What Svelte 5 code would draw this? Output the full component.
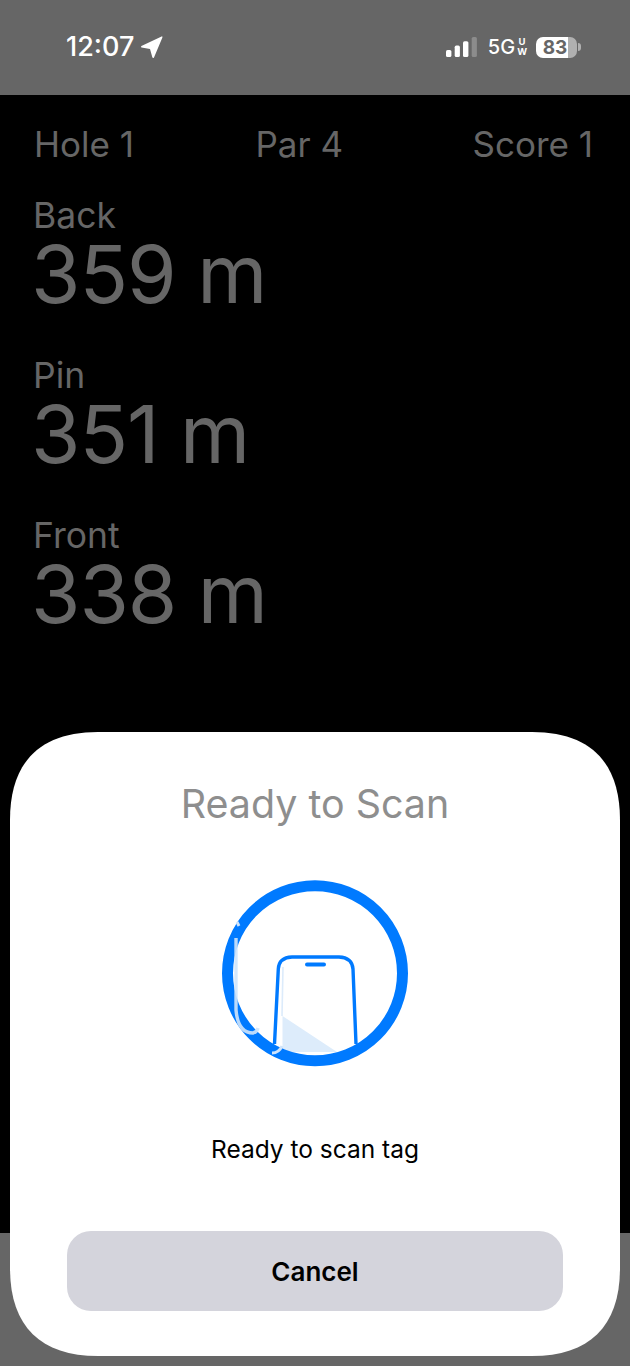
<script lang="ts">
  const distances = [
    { label: "Back", value: "359 m" },
    { label: "Pin", value: "351 m" },
    { label: "Front", value: "338 m" },
  ];
</script>

<div class="screen">
  <header class="status">
    <div class="time">
      <span>12:07</span>
      <svg class="arrow" width="24" height="24" viewBox="0 0 24 24">
        <path d="M22.6 1.4 L2.4 11 Q1.4 12 2.6 12.6 L11 14 L13.4 22.6 Q14.2 23.6 15 22.4 L23.4 2.4 Q23.6 1 22.6 1.4 Z" fill="#fff" />
      </svg>
    </div>
    <div class="indicators">
      <svg class="signal" width="33" height="21" viewBox="0 0 33 21">
        <rect x="0" y="13" width="5.4" height="7" rx="1.6" fill="#fff" />
        <rect x="8.7" y="8.6" width="5.2" height="11.4" rx="1.6" fill="#fff" />
        <rect x="17" y="4.2" width="5.4" height="15.8" rx="1.6" fill="#fff" />
        <rect x="25.7" y="0" width="5.2" height="20" rx="1.6" fill="#8c8c8c" />
      </svg>
      <div class="net">
        <span class="fiveg">5G</span>
        <span class="uw"><span>U</span><span>W</span></span>
      </div>
      <div class="battery">
        <div class="pill"><span>83</span></div>
        <div class="tip"></div>
      </div>
    </div>
  </header>

  <main class="content">
    <div class="topline">
      <span>Hole 1</span>
      <span class="par">Par 4</span>
      <span>Score 1</span>
    </div>
    {#each distances as d}
      <section class="distance">
        <div class="label">{d.label}</div>
        <div class="value">{d.value}</div>
      </section>
    {/each}
  </main>

  <div class="footer-dim"></div>

  <div class="sheet">
    <h1>Ready to Scan</h1>
    <svg class="scan" width="210" height="210" viewBox="0 0 210 210">
      <defs>
        <clipPath id="inner"><circle cx="105" cy="103.3" r="88" /></clipPath>
      </defs>
      <polygon points="72.5,146 127,182 72.5,182" fill="#ddecfb" clip-path="url(#inner)" />
      <path d="M64.5 174 L68.3 99 Q69 87.5 82 87 L129 87 Q142 87.5 143 99 L146 174" fill="none" stroke="#007aff" stroke-width="3.4" />
      <path d="M72 146 L73 97" fill="none" stroke="#dcebfb" stroke-width="1.6" />
      <rect x="95" y="92.5" width="21" height="4" rx="2" fill="#007aff" />
      <circle cx="105" cy="103.3" r="87.5" fill="none" stroke="#007aff" stroke-width="11" />
      <path d="M26 68 L26 140 Q28 163 43 163 Q47 162 48 158" fill="none" stroke="#cfe4fb" stroke-width="3.4" opacity="0.9" />
      <path d="M62 183 Q69 183 72 176" fill="none" stroke="#cfe4fb" stroke-width="3" />
      <path d="M27 52 L29 56" fill="none" stroke="#cfe4fb" stroke-width="3" />
    </svg>
    <p>Ready to scan tag</p>
    <button class="cancel">Cancel</button>
  </div>
</div>

<style>
  :global(body) {
    margin: 0;
    background: #000;
  }
  .screen {
    position: relative;
    width: 630px;
    height: 1366px;
    display: flex;
    flex-direction: column;
    overflow: hidden;
    font-family: Inter, "Noto Sans", sans-serif;
    background: #000;
  }
  .status {
    height: 95px;
    flex-shrink: 0;
    background: #666;
    color: #fff;
    display: flex;
    align-items: flex-start;
    justify-content: space-between;
    padding: 31px 49px 0 66px;
    box-sizing: border-box;
  }
  .time {
    display: flex;
    align-items: center;
    gap: 5px;
    font-size: 27px;
    font-weight: 500;
    line-height: 32px;
  }
  .arrow {
    margin-top: -1px;
  }
  .indicators {
    display: flex;
    align-items: center;
    height: 32px;
  }
  .signal {
    margin-right: 9px;
  }
  .net {
    display: flex;
    align-items: center;
    gap: 2px;
    margin-right: 9px;
  }
  .fiveg {
    font-size: 20px;
    font-weight: 500;
    line-height: 22px;
  }
  .uw {
    display: flex;
    flex-direction: column;
    align-items: center;
    font-size: 9.5px;
    font-weight: 700;
    line-height: 10px;
  }
  .battery {
    display: flex;
    align-items: center;
    gap: 1px;
  }
  .pill {
    width: 41px;
    height: 21px;
    border-radius: 7px;
    background: linear-gradient(to right, #fff 32px, #b0b0b0 32px);
    color: #666;
    font-size: 19px;
    font-weight: 700;
    line-height: 21px;
    text-align: center;
    padding-right: 3px;
    box-sizing: border-box;
  }
  .tip {
    width: 3px;
    height: 8px;
    border-radius: 0 3px 3px 0;
    background: #b0b0b0;
  }
  .content {
    flex: 1;
    background: #000;
    color: #666;
    padding: 26px 37px 0 34px;
  }
  .topline {
    display: flex;
    justify-content: space-between;
    font-size: 35px;
    line-height: 46px;
    margin-bottom: 28px;
  }
  .par {
    margin-right: 8px;
  }
  .distance {
    height: 160px;
  }
  .label {
    margin-left: -1px;
    padding-top: 3px;
    font-size: 35.5px;
    line-height: 36px;
  }
  .value {
    margin-left: -3px;
    font-size: 80px;
    line-height: 80px;
    letter-spacing: -1px;
  }
  .footer-dim {
    height: 133px;
    flex-shrink: 0;
    background: #666;
  }
  .sheet {
    position: absolute;
    left: 10px;
    top: 732px;
    width: 610px;
    height: 624px;
    background: #fff;
    clip-path: path("M88 0 L522 0 C580 0 610 30 610 88 L610 536 C610 594 580 624 522 624 L88 624 C30 624 0 594 0 536 L0 88 C0 30 30 0 88 0 Z");
    display: flex;
    flex-direction: column;
    align-items: center;
  }
  h1 {
    margin: 49px 0 0;
    height: 46px;
    font-size: 39.4px;
    font-weight: 400;
    line-height: 46px;
    color: #8e8e8e;
  }
  .scan {
    margin-top: 43px;
    flex-shrink: 0;
  }
  p {
    margin: 53px 0 0;
    font-size: 24.5px;
    line-height: 32px;
    color: #000;
  }
  .cancel {
    margin-top: 66px;
    width: 496px;
    height: 80px;
    border: none;
    border-radius: 24px;
    background: #d4d4dc;
    color: #000;
    font-family: inherit;
    font-size: 26px;
    font-weight: 600;
  }
</style>
